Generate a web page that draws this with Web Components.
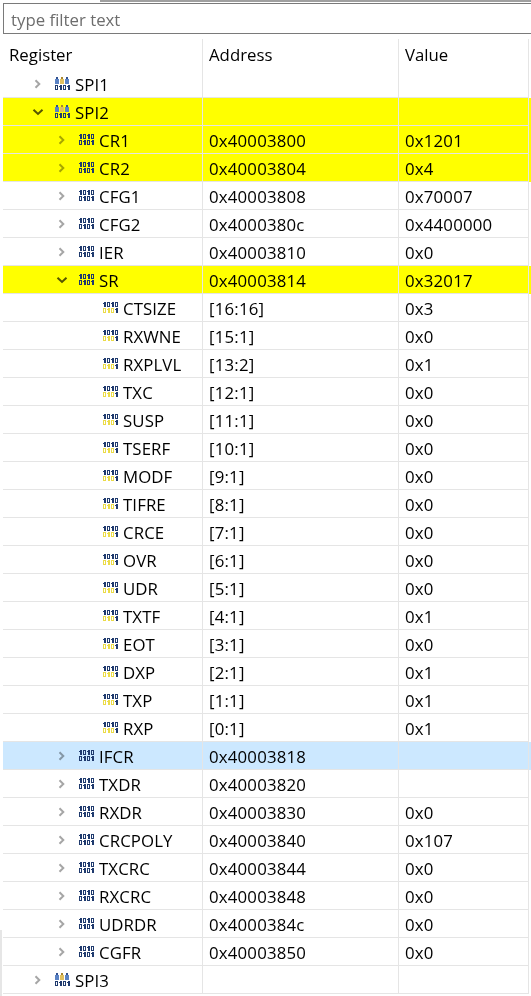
<!DOCTYPE html>
<html>
<head>
<meta charset="utf-8">
<title>Registers</title>
<style>
  html, body { margin: 0; padding: 0; background: #fff; }
  body { font-family: "Open Sans", "Liberation Sans", sans-serif; font-size: 16.8px; color: #000; overflow: hidden; }
</style>
</head>
<body>
<register-view>
  <register-row depth="0" kind="peripheral" arrow="closed" name="SPI1"></register-row>
  <register-row depth="0" kind="peripheral" arrow="open" name="SPI2" state="changed"></register-row>
  <register-row depth="1" kind="register" arrow="closed" name="CR1" addr="0x40003800" val="0x1201" state="changed"></register-row>
  <register-row depth="1" kind="register" arrow="closed" name="CR2" addr="0x40003804" val="0x4" state="changed"></register-row>
  <register-row depth="1" kind="register" arrow="closed" name="CFG1" addr="0x40003808" val="0x70007"></register-row>
  <register-row depth="1" kind="register" arrow="closed" name="CFG2" addr="0x4000380c" val="0x4400000"></register-row>
  <register-row depth="1" kind="register" arrow="closed" name="IER" addr="0x40003810" val="0x0"></register-row>
  <register-row depth="1" kind="register" arrow="open" name="SR" addr="0x40003814" val="0x32017" state="changed"></register-row>
  <register-row depth="2" kind="field" name="CTSIZE" addr="[16:16]" val="0x3"></register-row>
  <register-row depth="2" kind="field" name="RXWNE" addr="[15:1]" val="0x0"></register-row>
  <register-row depth="2" kind="field" name="RXPLVL" addr="[13:2]" val="0x1"></register-row>
  <register-row depth="2" kind="field" name="TXC" addr="[12:1]" val="0x0"></register-row>
  <register-row depth="2" kind="field" name="SUSP" addr="[11:1]" val="0x0"></register-row>
  <register-row depth="2" kind="field" name="TSERF" addr="[10:1]" val="0x0"></register-row>
  <register-row depth="2" kind="field" name="MODF" addr="[9:1]" val="0x0"></register-row>
  <register-row depth="2" kind="field" name="TIFRE" addr="[8:1]" val="0x0"></register-row>
  <register-row depth="2" kind="field" name="CRCE" addr="[7:1]" val="0x0"></register-row>
  <register-row depth="2" kind="field" name="OVR" addr="[6:1]" val="0x0"></register-row>
  <register-row depth="2" kind="field" name="UDR" addr="[5:1]" val="0x0"></register-row>
  <register-row depth="2" kind="field" name="TXTF" addr="[4:1]" val="0x1"></register-row>
  <register-row depth="2" kind="field" name="EOT" addr="[3:1]" val="0x0"></register-row>
  <register-row depth="2" kind="field" name="DXP" addr="[2:1]" val="0x1"></register-row>
  <register-row depth="2" kind="field" name="TXP" addr="[1:1]" val="0x1"></register-row>
  <register-row depth="2" kind="field" name="RXP" addr="[0:1]" val="0x1"></register-row>
  <register-row depth="1" kind="register" arrow="closed" name="IFCR" addr="0x40003818" val="" state="selected"></register-row>
  <register-row depth="1" kind="register" arrow="closed" name="TXDR" addr="0x40003820" val=""></register-row>
  <register-row depth="1" kind="register" arrow="closed" name="RXDR" addr="0x40003830" val="0x0"></register-row>
  <register-row depth="1" kind="register" arrow="closed" name="CRCPOLY" addr="0x40003840" val="0x107"></register-row>
  <register-row depth="1" kind="register" arrow="closed" name="TXCRC" addr="0x40003844" val="0x0"></register-row>
  <register-row depth="1" kind="register" arrow="closed" name="RXCRC" addr="0x40003848" val="0x0"></register-row>
  <register-row depth="1" kind="register" arrow="closed" name="UDRDR" addr="0x4000384c" val="0x0"></register-row>
  <register-row depth="1" kind="register" arrow="closed" name="CGFR" addr="0x40003850" val="0x0"></register-row>
  <register-row depth="0" kind="peripheral" arrow="closed" name="SPI3"></register-row>
</register-view>

<script>
// pixel cells of the binary icon, on a pitch of 4px
function bits(pattern, y, colors) {
  let out = '';
  pattern.split('').forEach((b, i) => {
    const x = i * 4;
    const c = colors[i % colors.length];
    if (b === '1') {
      out += `<path d="M${x + 1} ${y}h2v5h-2z M${x} ${y + 1}h1v1h-1z" fill="${c}"/>`;
    } else {
      out += `<path d="M${x} ${y}h3v5h-3z M${x + 1} ${y + 1}v3h1v-3z" fill-rule="evenodd" fill="${c}"/>`;
    }
  });
  return out;
}

const NAVY = '#1f3a6e';
const GOLD = '#ecdc48';

function person(x, head, body) {
  return `<rect x="${x + 1}" y="0" width="2" height="2" fill="${head}"/><rect x="${x}" y="2" width="4" height="5" fill="${body}"/>`;
}

const ICONS = {
  register: `<svg width="16" height="11" viewBox="0 0 16 11" shape-rendering="crispEdges">${bits('1010', 0, [NAVY])}${bits('0101', 6, [NAVY])}</svg>`,
  field: `<svg width="16" height="11" viewBox="0 0 16 11" shape-rendering="crispEdges">${bits('1010', 0, [NAVY])}${bits('0101', 6, [GOLD, GOLD, GOLD, NAVY])}</svg>`,
  peripheral: `<svg width="16" height="14" viewBox="0 0 16 14" shape-rendering="crispEdges">
    ${person(0, '#2f4f8f', '#5a82c4')}${person(5, '#a8862e', '#e0c060')}${person(10, '#2f4f8f', '#5a82c4')}
    ${bits('0101', 8, [NAVY])}
  </svg>`
};

const ARROWS = {
  closed: `<svg width="10" height="10" viewBox="0 0 10 10"><path d="M2.500 1.200 6.300 5 2.500 8.800" fill="none" stroke="#a6a6a6" stroke-width="2"/></svg>`,
  open: `<svg width="12" height="10" viewBox="0 0 12 10"><path d="M1.500 2.800 6 7 10.500 2.800" fill="none" stroke="#555" stroke-width="2"/></svg>`
};

class RegisterView extends HTMLElement {
  constructor() {
    super();
    this._root = this.attachShadow({mode: 'open'});
  }

  connectedCallback() {
    this._root.innerHTML = `
    <style>
      :host { display: block; position: relative; width: 531px; height: 996px; background: #fff; }
      .top-line { height: 2px; margin-left: 100px; background: #a0a0a0; margin-bottom: 1px; }
      .filter {
        display: flex; align-items: center; box-sizing: border-box;
        height: 31px; margin-left: 3px; padding: 1px 0 0 7px;
        border: 1px solid #7a7a7a; border-right: 0;
        color: #6d6d6d; margin-bottom: 5px;
      }
      .head { display: grid; grid-template-columns: 200px 196px 130px; margin-left: 3px; height: 31px; }
      .head div { box-sizing: border-box; padding-left: 6px; border-right: 1px solid #e5e5e5; display: flex; align-items: center; }
      .edge { position: absolute; left: 0; top: 930px; bottom: 0; width: 2px; background: #e6e6e6; }
    </style>
    <div class="top-line"></div>
    <div class="filter">type filter text</div>
    <div class="head"><div>Register</div><div>Address</div><div>Value</div></div>
    <slot></slot>
    <div class="edge"></div>`;
  }
}

class RegisterRow extends HTMLElement {
  constructor() {
    super();
    this._root = this.attachShadow({mode: 'open'});
  }

  connectedCallback() {
    const depth = Number(this.getAttribute('depth'));
    const arrow = this.getAttribute('arrow');
    const kind = this.getAttribute('kind');
    this._root.innerHTML = `
    <style>
      :host { display: grid; grid-template-columns: 200px 196px 130px; margin-left: 3px; height: 28px; }
      :host([state="changed"]) { background: #ffff00; }
      :host([state="selected"]) { background: #cce8ff; }
      .cell {
        box-sizing: border-box; display: flex; align-items: center; padding: 1px 0 0 6px;
        border-right: 1px solid #e5e5e5; border-bottom: 1px solid #e5e5e5;
        white-space: nowrap; overflow: hidden; letter-spacing: 0.2px;
      }
      .name { position: relative; letter-spacing: 0.1px; }
      .arrow { position: absolute; left: ${depth * 24 + 30}px; top: 9px; width: 12px; height: 10px; line-height: 0; mix-blend-mode: multiply; }
      .arrow.open { left: ${depth * 24 + 29}px; top: 9px; }
      .icon { position: absolute; left: ${depth * 24 + 52}px; top: ${kind === 'peripheral' ? 7 : 8}px; line-height: 0; }
      .label { margin-left: ${66 + depth * 24}px; }
    </style>
    <div class="cell name">
      ${arrow ? `<span class="arrow ${arrow}">${ARROWS[arrow]}</span>` : ''}
      <span class="icon">${ICONS[kind]}</span>
      <span class="label">${this.getAttribute('name')}</span>
    </div>
    <div class="cell">${this.getAttribute('addr') || ''}</div>
    <div class="cell">${this.getAttribute('val') || ''}</div>`;
  }
}

window.customElements.define('register-view', RegisterView);
window.customElements.define('register-row', RegisterRow);
</script>
</body>
</html>
